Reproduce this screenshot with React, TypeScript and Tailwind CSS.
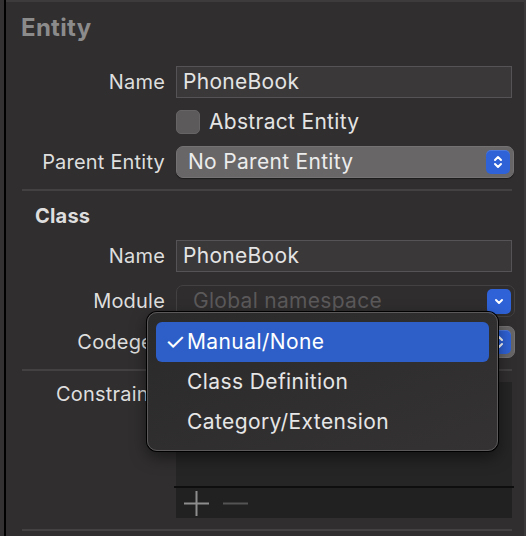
import { ReactNode } from 'react';

const font = { fontFamily: 'Inter, "Noto Sans", sans-serif' };

const Label = ({ children }: { children: ReactNode }) => (
  <div className="w-[143px] shrink-0 text-right text-[20px] tracking-[0.2px] text-[#dedede] whitespace-nowrap overflow-hidden">{children}</div>
);

const TextField = ({ value }: { value: string }) => (
  <div className="flex-1 h-[32px] border border-[#555355] bg-[#3a3839] px-[6px] flex items-center text-[21px] tracking-[0.3px] text-[#e4e4e4]">
    {value}
  </div>
);

const Stepper = () => (
  <div className="w-[24px] h-[24px] rounded-[5px] bg-[#2f62d6] flex items-center justify-center shadow-[inset_0_1px_0_rgba(255,255,255,0.15)]">
    <svg width="12" height="16" viewBox="0 0 12 16" fill="none" stroke="white" strokeWidth="2" strokeLinecap="round" strokeLinejoin="round">
      <path d="M3 6 L6 3 L9 6" />
      <path d="M3 10 L6 13 L9 10" />
    </svg>
  </div>
);

const DownButton = () => (
  <div className="w-[24px] h-[25px] rounded-[5px] bg-[#2f62d6] flex items-center justify-center">
    <svg width="12" height="10" viewBox="0 0 12 10" fill="none" stroke="white" strokeWidth="2" strokeLinecap="round" strokeLinejoin="round">
      <path d="M3 4 L6 7 L9 4" />
    </svg>
  </div>
);

const Row = ({ label, children, className = '' }: { label: string; children: ReactNode; className?: string }) => (
  <div className={`flex items-center gap-[11px] ${className}`}>
    <Label>{label}</Label>
    {children}
  </div>
);

export default function App() {
  return (
    <div style={font} className="relative w-[526px] h-[536px] overflow-hidden bg-[#302e2f] flex">
      <div className="w-[4px] shrink-0 bg-[#333132]" />
      <div className="w-[2px] shrink-0 bg-black" />
      <div className="flex-1 border-t-2 border-[#3d3b3c] border-r-2 border-r-[#3b393a] pl-[16px] pr-[12px] flex flex-col">
        <div className="h-[47px] pt-[5px] flex items-center -ml-[1px] text-[24px] font-bold tracking-[0.3px] text-[#8c8b8c]">Entity</div>

        <Row label="Name" className="mt-[17px]">
          <TextField value="PhoneBook" />
        </Row>

        <div className="flex items-center gap-[9px] mt-[12px] ml-[154px] h-[24px]">
          <div className="w-[24px] h-[24px] rounded-[5px] bg-[#5c5a5b] border border-[#666465]" />
          <span className="text-[21px] tracking-[0.3px] text-[#e4e4e4]">Abstract Entity</span>
        </div>

        <Row label="Parent Entity" className="mt-[12px]">
          <div className="flex-1 h-[32px] -mr-[2px] rounded-[7px] bg-[#686667] border border-[#747273] pl-[11px] pr-[3px] flex items-center justify-between text-[21px] tracking-[0.3px] text-[#ececec] shadow-[0_1px_1px_rgba(0,0,0,0.4)]">
            <span>No Parent Entity</span>
            <Stepper />
          </div>
        </Row>

        <div className="mt-[11px] h-[2px] bg-[#434142]" />

        <div className="h-[49px] flex items-center pl-[13px] text-[20px] font-bold tracking-[0.2px] text-[#dedede]">Class</div>

        <Row label="Name">
          <TextField value="PhoneBook" />
        </Row>

        <Row label="Module" className="mt-[13px]">
          <div className="flex-1 h-[32px] -mr-[3px] rounded-[7px] bg-[#2f2d2e] border border-[#434142] pl-[16px] pr-[3px] flex items-center justify-between text-[21px] tracking-[0.3px] text-[#5b595a]">
            <span>Global namespace</span>
            <DownButton />
          </div>
        </Row>

        <Row label="Codegen" className="mt-[9px]">
          <div className="flex-1 h-[32px] -mr-[3px] rounded-[7px] bg-[#686667] border border-[#747273] pl-[11px] pr-[3px] flex items-center justify-between text-[21px] text-[#ececec]">
            <span className="invisible">Manual/None</span>
            <Stepper />
          </div>
        </Row>

        <div className="mt-[11px] h-[2px] bg-[#434142]" />

        <div className="flex gap-[11px] mt-[11px]">
          <div className="w-[143px] shrink-0 -mt-[3px] pl-[34px] text-[20px] tracking-[0.2px] text-[#dedede] whitespace-nowrap">Constraints</div>
          <div className="flex-1 flex flex-col">
            <div className="h-[104px] bg-[#262526]" />
            <div className="h-[2px] -mx-[2px] bg-[#0e0e0e]" />
            <div className="h-[30px] bg-[#222122] flex items-center pl-[7px] gap-[12px]">
              <svg width="27" height="27" viewBox="0 0 27 27">
                <path d="M13.5 1 V26 M1 13.5 H26" stroke="#8e8d8e" strokeWidth="2" />
              </svg>
              <svg width="27" height="27" viewBox="0 0 27 27">
                <path d="M1 13.5 H26" stroke="#555455" strokeWidth="2" />
              </svg>
            </div>
          </div>
        </div>

        <div className="mt-[11px] h-[2px] bg-[#434142]" />
      </div>

      {/* Codegen pop-up menu */}
      <div className="absolute left-[147px] top-[312px] w-[351px] h-[139px] rounded-[10px] border border-[#5b595a] bg-gradient-to-br from-[#2b2a2b] to-[#343233] shadow-[0_0_0_1px_#000,0_6px_16px_rgba(0,0,0,0.5)] px-[8px] pt-[9px] flex flex-col text-[21px] tracking-[0.4px] text-[#e6e6e6]">
        <div className="h-[40px] rounded-[6px] bg-[#2e5fc8] flex items-center pl-[9px] text-white">
          <span className="w-[22px] text-[23px] leading-none">✓</span>
          <span>Manual/None</span>
        </div>
        <div className="h-[40px] flex items-center pl-[31px]">Class Definition</div>
        <div className="h-[40px] flex items-center pl-[31px]">Category/Extension</div>
      </div>
    </div>
  );
}
